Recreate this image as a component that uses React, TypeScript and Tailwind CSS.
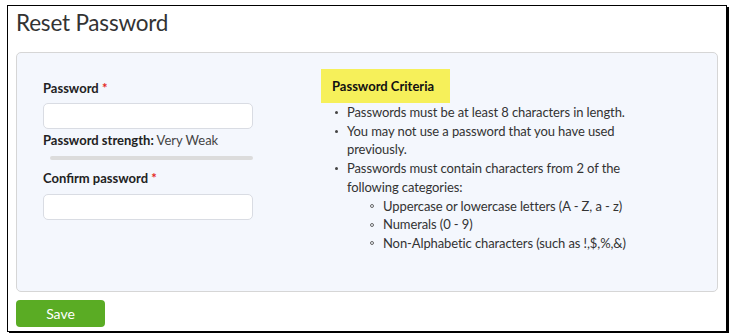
export default function App() {
  return (
    <div className="w-[729px] h-[333px] bg-white font-['Lato',sans-serif] text-[#333]">
      <div className="ml-[7px] pt-[5px]">
        <div className="w-[720px] h-[327px] border border-black shadow-[2px_2px_0_0_#000] px-2 flex flex-col">
          <h1 className="mt-[3px] text-[22.5px] leading-[28px] font-normal text-[#333] tracking-[-0.2px]">
            Reset Password
          </h1>

          {/* Main panel */}
          <div className="mt-[15px] h-[240px] rounded-[5px] border border-[#d6d6d6] bg-[#f4f7fd] flex">
            {/* Left column */}
            <div className="ml-[26px] pt-[26px] w-[210px] flex flex-col text-[13px] leading-[18px]">
              <label className="font-bold text-[#222]">
                Password <span className="text-[#e4261c]">*</span>
              </label>
              <input
                type="password"
                className="mt-[6px] h-[26px] w-[210px] rounded-[5px] border border-[#d9dce3] bg-white outline-none"
              />
              <div className="mt-[2px] text-[#222]">
                <span className="font-bold">Password strength:</span>{" "}
                <span className="text-[#444]">Very Weak</span>
              </div>
              <div className="mt-[7px] ml-[7px] h-[4px] w-[203px] rounded-full bg-[#dcdcdc]" />
              <label className="mt-[9px] font-bold text-[#222]">
                Confirm password <span className="text-[#e4261c]">*</span>
              </label>
              <input
                type="password"
                className="mt-[7px] h-[26px] w-[210px] rounded-[5px] border border-[#d9dce3] bg-white outline-none"
              />
            </div>

            {/* Right column */}
            <div className="ml-[68px] pt-[16px] w-[330px] text-[13px] leading-[18.7px] text-[#333] tracking-[-0.1px]">
              <div className="flex h-[34px] w-[129px] items-center pl-[11px] bg-[#f6f05a] font-bold text-[#111] tracking-normal">
                Password Criteria
              </div>
              <ul>
                <li className="flex">
                  <span className="w-[26px] shrink-0 flex justify-start pl-[14px] pt-[8px]">
                    <span className="w-[3px] h-[3px] rounded-full bg-[#444]" />
                  </span>
                  <span>Passwords must be at least 8 characters in length.</span>
                </li>
                <li className="flex">
                  <span className="w-[26px] shrink-0 flex justify-start pl-[14px] pt-[8px]">
                    <span className="w-[3px] h-[3px] rounded-full bg-[#444]" />
                  </span>
                  <span>You may not use a password that you have used previously.</span>
                </li>
                <li className="flex">
                  <span className="w-[26px] shrink-0 flex justify-start pl-[14px] pt-[8px]">
                    <span className="w-[3px] h-[3px] rounded-full bg-[#444]" />
                  </span>
                  <div>
                    <span>Passwords must contain characters from 2 of the following categories:</span>
                    <ul>
                      {[
                        "Uppercase or lowercase letters (A - Z, a - z)",
                        "Numerals (0 - 9)",
                        "Non-Alphabetic characters (such as !,$,%,&)",
                      ].map((t) => (
                        <li key={t} className="flex">
                          <span className="w-[36px] shrink-0 flex justify-start pl-[23px] pt-[7.5px]">
                            <span className="w-[4px] h-[4px] rounded-full border border-[#666]" />
                          </span>
                          <span>{t}</span>
                        </li>
                      ))}
                    </ul>
                  </div>
                </li>
              </ul>
            </div>
          </div>

          <button className="mt-[8px] h-[27px] w-[89px] rounded-[4px] bg-[#5aac24] text-white text-[14px] leading-[27px]">
            Save
          </button>
        </div>
      </div>
    </div>
  );
}
